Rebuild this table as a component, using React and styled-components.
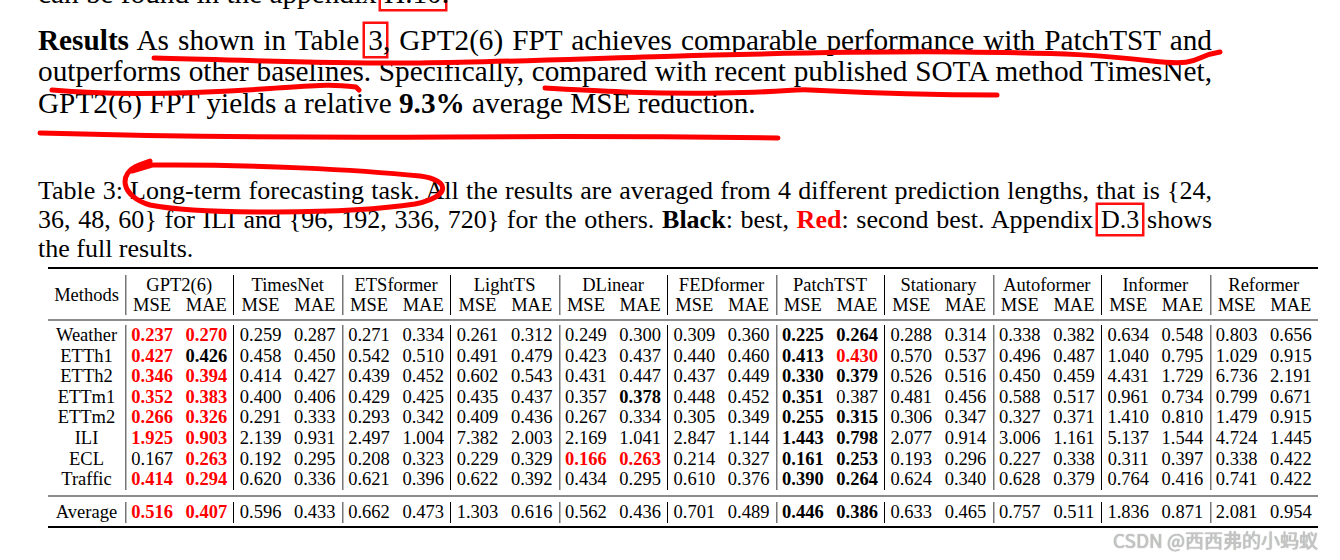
import React from "react";
import styled, { createGlobalStyle } from "styled-components";

const GlobalStyle = createGlobalStyle`
  html, body { margin: 0; padding: 0; background: #fff; }
  body { font-family: "Liberation Serif", "Times New Roman", serif; color: #000; }
`;

const Page = styled.div`
  position: relative;
  width: 1340px;
  height: 560px;
  overflow: hidden;
  background: #fff;
`;

const TextBlock = styled.div`
  margin-left: 38px;
  width: 1174px;
`;

const Prose = styled.div`
  font-size: ${(p) => p.$size}px;
  line-height: ${(p) => p.$lh}px;
  margin-top: ${(p) => p.$top}px;
`;

const Line = styled.div`
  text-align: justify;
  text-align-last: ${(p) => (p.$last ? "left" : "justify")};
`;

const Strong = styled.b`
  font-weight: 700;
  color: ${(p) => (p.$red ? "#ff0000" : "inherit")};
`;

const LinkBox = styled.span`
  padding: 0 3px;
  margin: 0 -3px;
  box-shadow: 0 0 0 2.5px #ff1010;
`;

const Table = styled.div`
  margin: 4px 0 0 48px;
  width: 1270px;
  font-size: 18.5px;
`;

const Rule = styled.div`
  height: 2px;
  background: ${(p) => (p.$gray ? "#8c8c8c" : "#000")};
`;

const Grid = styled.div`
  display: grid;
  grid-template-columns: 77px repeat(22, 1fr);
  grid-auto-rows: ${(p) => p.$row}px;
  padding: ${(p) => p.$pad};
`;

const edge = (e) =>
  e === "gray"
    ? "box-shadow: inset 1.5px 0 0 #777;"
    : e === "black"
    ? "box-shadow: inset 1px 0 0 #000;"
    : "";

const Cell = styled.div`
  text-align: center;
  white-space: nowrap;
  line-height: ${(p) => p.$lh || 20}px;
  grid-column: ${(p) => (p.$span ? `span ${p.$span}` : "auto")};
  grid-row: ${(p) => (p.$rows ? `span ${p.$rows}` : "auto")};
  align-self: ${(p) => (p.$rows ? "center" : "stretch")};
  font-weight: ${(p) => (p.$tone ? 700 : 400)};
  color: ${(p) => (p.$tone === "red" ? "#ff0000" : "#000")};
  ${(p) => edge(p.$edge)}
`;

const Ink = styled.svg`
  position: absolute;
  left: 0;
  top: 0;
  pointer-events: none;
`;

const Watermark = styled.div`
  position: absolute;
  left: 1113px;
  top: 528px;
  font-family: "Noto Sans CJK SC", "Noto Sans", sans-serif;
  font-size: 19px;
  line-height: 24px;
  color: #c6c6c6;
  text-shadow: 0 0 1px #8a8a8a;
  white-space: nowrap;
`;

const methods = [
  "GPT2(6)",
  "TimesNet",
  "ETSformer",
  "LightTS",
  "DLinear",
  "FEDformer",
  "PatchTST",
  "Stationary",
  "Autoformer",
  "Informer",
  "Reformer",
];

const rows = [
  ["Weather", "0.237r 0.270r 0.259 0.287 0.271 0.334 0.261 0.312 0.249 0.300 0.309 0.360 0.225b 0.264b 0.288 0.314 0.338 0.382 0.634 0.548 0.803 0.656"],
  ["ETTh1", "0.427r 0.426b 0.458 0.450 0.542 0.510 0.491 0.479 0.423 0.437 0.440 0.460 0.413b 0.430r 0.570 0.537 0.496 0.487 1.040 0.795 1.029 0.915"],
  ["ETTh2", "0.346r 0.394r 0.414 0.427 0.439 0.452 0.602 0.543 0.431 0.447 0.437 0.449 0.330b 0.379b 0.526 0.516 0.450 0.459 4.431 1.729 6.736 2.191"],
  ["ETTm1", "0.352r 0.383r 0.400 0.406 0.429 0.425 0.435 0.437 0.357 0.378b 0.448 0.452 0.351b 0.387 0.481 0.456 0.588 0.517 0.961 0.734 0.799 0.671"],
  ["ETTm2", "0.266r 0.326r 0.291 0.333 0.293 0.342 0.409 0.436 0.267 0.334 0.305 0.349 0.255b 0.315b 0.306 0.347 0.327 0.371 1.410 0.810 1.479 0.915"],
  ["ILI", "1.925r 0.903r 2.139 0.931 2.497 1.004 7.382 2.003 2.169 1.041 2.847 1.144 1.443b 0.798b 2.077 0.914 3.006 1.161 5.137 1.544 4.724 1.445"],
  ["ECL", "0.167 0.263r 0.192 0.295 0.208 0.323 0.229 0.329 0.166r 0.263r 0.214 0.327 0.161b 0.253b 0.193 0.296 0.227 0.338 0.311 0.397 0.338 0.422"],
  ["Traffic", "0.414r 0.294r 0.620 0.336 0.621 0.396 0.622 0.392 0.434 0.295 0.610 0.376 0.390b 0.264b 0.624 0.340 0.628 0.379 0.764 0.416 0.741 0.422"],
];

const average = ["Average", "0.516r 0.407r 0.596 0.433 0.662 0.473 1.303 0.616 0.562 0.436 0.701 0.489 0.446b 0.386b 0.633 0.465 0.757 0.511 1.836 0.871 2.081 0.954"];

const groupEdge = (g) => (g % 2 === 0 ? "gray" : "black");

function ValueCells({ values, lh }) {
  return values.split(" ").map((v, i) => {
    const tone = v.endsWith("r") ? "red" : v.endsWith("b") ? "bold" : undefined;
    const text = tone ? v.slice(0, -1) : v;
    return (
      <Cell key={i} $lh={lh} $tone={tone} $edge={i % 2 === 0 ? groupEdge(i / 2) : undefined}>
        {text}
      </Cell>
    );
  });
}

function DataRows({ data, lh }) {
  return data.map(([name, values]) => (
    <React.Fragment key={name}>
      <Cell $lh={lh}>{name}</Cell>
      <ValueCells values={values} lh={lh} />
    </React.Fragment>
  ));
}

export default function App() {
  return (
    <Page>
      <GlobalStyle />
      <TextBlock>
        <Prose $size={29.25} $lh={31.5} $top={-22}>
          <Line $last>
            can be found in the appendix <LinkBox>H.10</LinkBox>.
          </Line>
        </Prose>
        <Prose $size={29.25} $lh={31.5} $top={15}>
          <Line>
            <Strong>Results</Strong> As shown in Table <LinkBox>3</LinkBox>, GPT2(6) FPT achieves comparable performance with PatchTST and
          </Line>
          <Line>
            outperforms other baselines. Specifically, compared with recent published SOTA method TimesNet,
          </Line>
          <Line $last>
            GPT2(6) FPT yields a relative <Strong>9.3%</Strong> average MSE reduction.
          </Line>
        </Prose>
        <Prose $size={26} $lh={29} $top={57}>
          <Line>
            Table 3: Long-term forecasting task. All the results are averaged from 4 different prediction lengths, that is {"{"}24,
          </Line>
          <Line>
            36, 48, 60{"}"} for ILI and {"{"}96, 192, 336, 720{"}"} for the others. <Strong>Black</Strong>: best, <Strong $red>Red</Strong>: second best. Appendix <LinkBox>D.3</LinkBox> shows
          </Line>
          <Line $last>the full results.</Line>
        </Prose>
      </TextBlock>

      <Table>
        <Rule />
        <Grid $row={20} $pad="6px 0 4px">
          <Cell $rows={2}>Methods</Cell>
          {methods.map((m, g) => (
            <Cell key={m} $span={2} $edge={groupEdge(g)}>
              {m}
            </Cell>
          ))}
          {methods.map((m, g) => (
            <React.Fragment key={m}>
              <Cell $edge={groupEdge(g)}>MSE</Cell>
              <Cell>MAE</Cell>
            </React.Fragment>
          ))}
        </Grid>
        <Rule $gray />
        <Grid $row={20.6} $pad="4px 0 5px">
          <DataRows data={rows} lh={20.6} />
        </Grid>
        <Rule $gray />
        <Grid $row={21} $pad="5px 0 3px">
          <DataRows data={[average]} lh={21} />
        </Grid>
        <Rule />
      </Table>

      <Ink width="1340" height="560" viewBox="0 0 1340 560" fill="none" stroke="#ff0000" strokeWidth="5" strokeLinecap="round" strokeLinejoin="round">
        <path d="M154 58 C250 60 330 64 420 63 S600 58 680 56 S850 51 960 52 S1100 55 1152 61 S1192 56 1220 52" />
        <path d="M52 90 C120 96 200 93 262 89 S330 84 356 87 L359 90" />
        <path d="M545 88 C600 91 650 94 720 93 S790 89 810 90 S920 95 997 95" />
        <path d="M40 133 C150 136 300 138 450 137 S700 137 778 138" />
        <path d="M150 161 L139 165 C118 173 120 196 150 205 C200 215 350 214 415 204 C452 196 450 180 420 176 C360 170 250 164 152 165 L132 171" />
      </Ink>

      <Watermark>CSDN @西西弗的小蚂蚁</Watermark>
    </Page>
  );
}
